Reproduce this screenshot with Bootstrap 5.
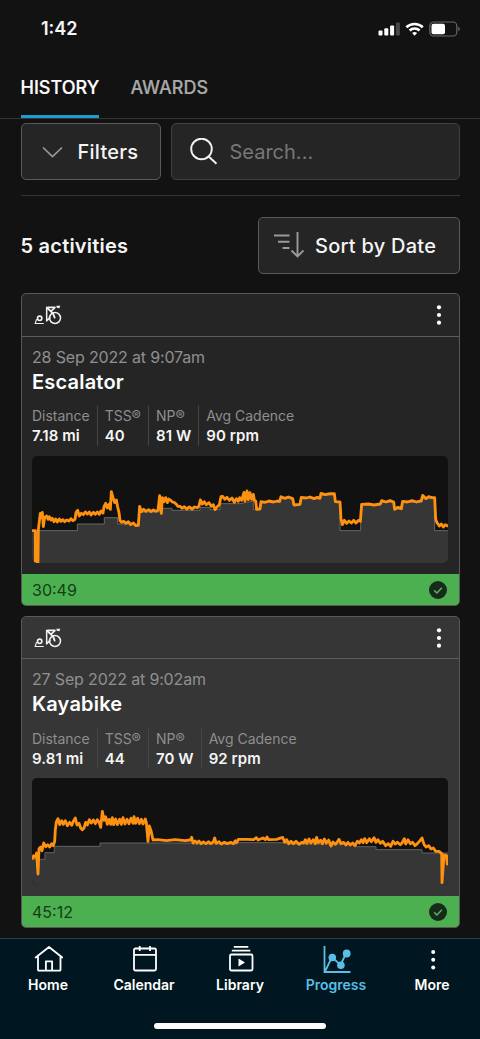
<!DOCTYPE html>
<html lang="en" data-bs-theme="dark">
<head>
<meta charset="utf-8">
<meta name="viewport" content="width=device-width, initial-scale=1">
<title>History</title>
<link href="https://cdn.jsdelivr.net/npm/bootstrap@5.3.0/dist/css/bootstrap.min.css" rel="stylesheet">
<style>
  body{background:#121212;color:#f5f5f5;font-family:Inter,"Liberation Sans",sans-serif;height:1039px;overflow:hidden}
  svg{display:block;flex:none}
  .statusbar{height:57px;padding:1px 20px 0 41px}
  .clock{font-size:18px;font-weight:600;line-height:22px;padding-top:1px}
  .toptabs{height:62px;border-bottom:1px solid #343434;padding-left:20.5px;gap:31px}
  .toptabs .nav-link{padding:0;height:61px;line-height:61px;font-size:18px;font-weight:500;-webkit-text-stroke:.2px;color:#a9a9a9;border-bottom:3px solid transparent;letter-spacing:.03px}
  .toptabs .nav-link.active{color:#fff;border-color:#1f9ccb}
  .page{padding:4px 20.5px 0 20.5px}
  .ctl{height:57px;background:#252525;border:1px solid #5a5a5a;border-radius:5px;font-size:20px;font-weight:500;color:#f5f5f5;padding:2px 0 0;letter-spacing:.25px}
  .ctl-search{border-color:#404040;font-weight:400;color:#777;letter-spacing:0}
  .rule{height:1px;background:#343434;margin:15px 0 21px}
  .count{font-size:20px;font-weight:600;letter-spacing:.22px;padding-top:1px}
  .ride{--bs-card-border-radius:5px;border:1px solid #585858;background:#252525;height:312.5px;overflow:hidden;margin-bottom:10px}
  .ride.alt{background:#363636}
  .ride .ridehead{height:42.500px;border-bottom:1px solid #5c5c5c;padding:0 17px 0 12px}
  .when{font-size:16px;line-height:20px;color:#909090;margin-top:10px;letter-spacing:-.16px}
  .ridename{font-size:20px;line-height:24px;font-weight:600;margin:3px 0 0;letter-spacing:.2px}
  .stats{margin-top:12.500px;height:40px;font-size:14px;line-height:20px}
  .stats>div{padding:0 7px;border-left:1px solid #464646;white-space:nowrap;letter-spacing:-.02px}
  .stats>div:first-child{padding-left:0;border:0}
  .stats span{display:block;color:#8e8e8e}
  .stats b{display:block;font-weight:600;font-size:15px;letter-spacing:.07px}
  .plot{width:416px;height:107px;border-radius:5px;background:#111;margin-top:9.500px;overflow:hidden}
  .ridefoot{background:#4caf50;color:#153d17;height:31px;font-size:16px;padding:1px 12px 0 10.500px}
  .tabbar{height:101px;background:#001620;border-top:1px solid #29424b}
  .tabbar .nav-link{padding:6px 0 0;width:96px;color:#fff;font-size:14px;font-weight:600;line-height:21px}
  .tabbar .nav-link.active{color:#58bfe6}
  .homebar{width:172px;height:6px;border-radius:3px;background:#fff;bottom:10px}
</style>
</head>
<body class="d-flex flex-column">
<svg class="d-none">
  <symbol id="bike" viewBox="0 0 84 60">
    <g fill="none" stroke="#f2f2f2" stroke-linecap="round" stroke-linejoin="round">
      <circle cx="63" cy="39" r="16.500" stroke-width="4.500"/>
      <circle cx="17" cy="40" r="6.500" stroke-width="5"/>
      <path d="M3 55.500H28M4 55l3-11" stroke-width="3.500"/>
      <path d="M38 7v41M39 46l9-8" stroke-width="4.500"/>
      <path d="M40 9l17 16M57 25l5 13" stroke-width="5.500"/>
      <path d="M42 7h21M62 9l-9 8" stroke-width="5"/>
    </g>
    <path d="M67 2h12l-3 8-8-2z" fill="#f2f2f2"/>
  </symbol>
  <symbol id="dots" viewBox="0 0 6 20"><circle cx="3" cy="2.300" r="2.100"/><circle cx="3" cy="10" r="2.100"/><circle cx="3" cy="17.700" r="2.100"/></symbol>
  <symbol id="done" viewBox="0 0 18 18"><circle cx="9" cy="9" r="9" fill="#162b19"/><path d="M5.200 9.400l2.700 2.600 5-5.200" fill="none" stroke="#5fae63" stroke-width="1.500"/></symbol>
</svg>

<header class="statusbar d-flex align-items-center justify-content-between">
  <span class="clock">1:42</span>
  <svg width="82" height="16" viewBox="0 0 82 16">
    <g fill="#fff"><rect x=".5" y="9.500" width="4" height="5" rx="1"/><rect x="6.300" y="7.300" width="4" height="7.200" rx="1"/><rect x="12.100" y="4.500" width="4" height="10" rx="1"/></g>
    <rect x="17.900" y="1.500" width="4" height="13" rx="1" fill="#484848"/>
    <g fill="none" stroke="#fff" stroke-width="2.600"><path d="M28.400 6.200a12 12 0 0 1 16.400 0"/><path d="M31.600 9.500a7.300 7.300 0 0 1 10 0"/></g>
    <path d="M36.600 14.700l-2.500-2.600a3.600 3.600 0 0 1 5 0z" fill="#fff"/>
    <rect x="51.800" y="1" width="27" height="14" rx="3.800" fill="none" stroke="#686868" stroke-width="1.200"/>
    <rect x="53.500" y="2.700" width="13.500" height="10.600" rx="2" fill="#fff"/>
    <path d="M80.200 5.800v4.400q1.600-.6 1.600-2.200t-1.600-2.200" fill="#686868"/>
  </svg>
</header>

<nav class="toptabs nav flex-nowrap">
  <a class="nav-link active">HISTORY</a>
  <a class="nav-link">AWARDS</a>
</nav>

<main class="page flex-grow-1 overflow-hidden">
  <div class="d-flex" style="gap:10px">
    <button class="ctl btn d-flex align-items-center" style="width:140px;padding-left:20px;gap:15px">
      <svg width="21" height="12" viewBox="0 0 21 12"><path d="M1 1.500l9.500 9 9.500-9" fill="none" stroke="#999" stroke-width="1.700"/></svg>Filters
    </button>
    <div class="ctl ctl-search flex-fill d-flex align-items-center" style="padding-left:18px;gap:12px">
      <svg width="28" height="28" viewBox="0 0 28 28" fill="none" stroke="#f2f2f2" stroke-width="1.900"><circle cx="11.500" cy="11" r="10.300"/><path d="M18.700 18.500l7.800 7.300"/></svg>Search...
    </div>
  </div>
  <div class="rule"></div>
  <div class="d-flex align-items-center justify-content-between" style="margin-bottom:19.500px">
    <span class="count">5 activities</span>
    <button class="ctl btn d-flex align-items-center" style="width:201.500px;padding-left:15px;gap:11px">
      <svg width="30" height="28" viewBox="0 0 30 28" fill="none" stroke="#999" stroke-width="1.900"><path d="M0 3.500h15.500M4 9.700h11.500M8.500 16h7M23.500 0v24.500M17.500 18.500l6 6 6-6"/></svg>Sort by Date
    </button>
  </div>

  <article class="ride card">
    <div class="ridehead d-flex align-items-center justify-content-between"><svg width="28" height="20"><use href="#bike"/></svg><svg width="6" height="20" fill="#fff"><use href="#dots"/></svg></div>
    <div class="flex-grow-1" style="padding:0 10.500px">
      <div class="when">28 Sep 2022 at 9:07am</div>
      <h2 class="ridename">Escalator</h2>
      <div class="stats d-flex"><div><span>Distance</span><b>7.18 mi</b></div><div><span>TSS®</span><b>40</b></div><div><span>NP®</span><b>81 W</b></div><div><span>Avg Cadence</span><b>90 rpm</b></div></div>
      <svg class="plot" viewBox="36 18 1248 321">
        <path d="M30 350V242H172V222H253V203H293V222H356V186H417V175H456V181H540V172H570V179H600V161H660L700 153V178H722V157H780V146H818V164H842V146H900V136H944V157H960V242H1022V164H1082V157H1122V178H1146V157H1206V146H1244V242H1290V350Z" fill="#363636" stroke="#666" stroke-width="3"/>
        <path d="M36 242L46 242V338H54L55 240 59 205 61 190 64 203 67 187 70 230 74 202 80 198 84 208 88 200 93 210 97 205 102 215 107 207 112 216 118 207 123 214 129 209 134 215 140 210 147 213 153 206 159 212 165 208 168 188 173 181 178 198 184 190 190 194 196 186 202 192 208 186 213 195 220 187 226 193 232 186 238 193 243 183 249 189 252 170 257 160 262 174 268 162 271 178 274 125 279 143 284 158 289 150 293 171 297 188 300 212 305 217 311 214 318 220 325 215 332 224 340 219 347 227 355 226 359 169 364 185 371 178 378 184 386 179 393 185 400 180 408 184 414 181 419 137 424 190 427 143 432 155 437 143 442 158 446 147 452 151 457 156 464 158 469 163 474 169 480 169 486 175 493 170 500 177 508 171 516 177 524 171 532 173 537 168 541 150 547 162 553 155 559 164 567 158 574 169 580 164 585 179 591 171 598 164 603 140 608 139 614 148 621 142 628 151 636 144 643 157 649 146 655 154 659 143 665 151 672 127 675 153 681 123 685 149 690 128 695 148 700 133 703 151 707 153 710 178 720 177 723 155 735 157 747 153 760 156 772 153 779 154 783 140 794 145 805 141 818 146 822 165 840 163 844 142 858 144 870 141 882 146 892 142 900 145 903 130 916 134 929 131 943 131 946 155 960 156 963 207 967 224 973 211 980 220 987 213 994 219 1001 211 1008 219 1015 211 1021 214 1025 163 1045 162 1062 165 1081 162 1085 152 1098 156 1110 152 1121 156 1124 178 1134 172 1144 176 1148 154 1162 156 1176 152 1190 156 1204 152 1208 136 1218 146 1226 140 1236 143 1244 143 1247 208 1251 218 1258 228 1264 222 1270 231 1276 224 1285 229" fill="none" stroke="#ff9111" stroke-width="8.500" stroke-linejoin="round"/>
      </svg>
    </div>
    <div class="ridefoot d-flex align-items-center justify-content-between"><span>30:49</span><svg width="18" height="18"><use href="#done"/></svg></div>
  </article>

  <article class="ride alt card">
    <div class="ridehead d-flex align-items-center justify-content-between"><svg width="28" height="20"><use href="#bike"/></svg><svg width="6" height="20" fill="#fff"><use href="#dots"/></svg></div>
    <div class="flex-grow-1" style="padding:0 10.500px">
      <div class="when">27 Sep 2022 at 9:02am</div>
      <h2 class="ridename">Kayabike</h2>
      <div class="stats d-flex"><div><span>Distance</span><b>9.81 mi</b></div><div><span>TSS®</span><b>44</b></div><div><span>NP®</span><b>70 W</b></div><div><span>Avg Cadence</span><b>92 rpm</b></div></div>
      <svg class="plot" viewBox="36 10 1248 321">
        <path d="M30 350V254H75V234H103V215H240V205H520V208H650V204H800V208H1008V216H1068V225H1206V235H1290V350Z" fill="#363636" stroke="#626262" stroke-width="3"/>
        <path d="M36 254L41 243 46 248 50 235 54 298 57 222 62 217 66 228 71 205 77 216 83 210 89 217 95 207 100 213 104 200 106 165 109 142 114 132 119 150 125 138 130 149 136 138 142 153 149 143 155 152 161 138 166 130 171 151 177 146 182 160 187 165 192 160 197 143 202 151 208 135 214 145 220 136 226 147 232 135 237 142 242 158 247 110 252 137 257 126 262 149 267 134 272 149 277 129 281 150 287 133 292 150 299 134 304 149 309 129 315 148 321 134 327 147 333 131 339 146 342 126 347 146 353 131 358 147 364 134 369 148 376 133 379 144 384 200 388 154 393 168 399 196 412 195 440 198 465 195 495 198 511 196 515 188 519 205 525 199 531 205 537 199 543 207 550 202 558 207 566 201 572 207 580 202 584 190 589 206 597 201 604 208 613 203 622 207 632 203 640 207 646 198 650 204 655 194 680 194 701 195 709 189 714 196 729 190 736 195 741 187 746 195 770 194 788 188 794 203 800 195 806 207 813 200 820 207 828 200 837 209 845 203 851 205 856 195 861 206 867 193 873 205 880 195 886 207 890 188 895 204 902 197 907 207 913 193 919 205 926 196 933 214 939 202 946 209 952 202 957 194 963 207 971 203 978 211 984 203 991 211 998 205 1005 213 1012 200 1018 205 1024 195 1029 204 1034 192 1040 204 1048 192 1054 201 1062 189 1068 203 1074 195 1081 206 1088 200 1097 213 1105 207 1112 215 1119 200 1126 208 1132 203 1141 210 1146 205 1153 192 1157 208 1164 195 1171 207 1178 203 1185 213 1192 207 1200 198 1206 190 1212 209 1218 217 1226 213 1233 223 1240 220 1247 230 1257 230 1265 237 1266 324 1272 241 1279 243 1282 268 1284 240" fill="none" stroke="#ff9111" stroke-width="8.500" stroke-linejoin="round"/>
      </svg>
    </div>
    <div class="ridefoot d-flex align-items-center justify-content-between"><span>45:12</span><svg width="18" height="18"><use href="#done"/></svg></div>
  </article>
</main>

<footer class="tabbar position-relative flex-shrink-0">
  <nav class="nav flex-nowrap">
    <a class="nav-link d-flex flex-column align-items-center"><svg width="29" height="29" viewBox="0 0 29 29" fill="none" stroke="#fff" stroke-width="1.800" stroke-linejoin="round" stroke-linecap="round"><path d="M1.700 12.500L15 2l13.300 10.500M4 11.500v13.200q0 1 1 1h20.500q1 0 1-1V11.500M11.900 25.500v-9.200h6.200v9.200"/></svg>Home</a>
    <a class="nav-link d-flex flex-column align-items-center"><svg width="29" height="29" viewBox="0 0 29 29" fill="none" stroke="#fff" stroke-width="1.800"><rect x="4" y="3.500" width="22" height="22" rx="1.500"/><path d="M4 9.800h22M9.700 1v5M20 1v5"/></svg>Calendar</a>
    <a class="nav-link d-flex flex-column align-items-center"><svg width="29" height="29" viewBox="0 0 29 29" fill="none" stroke="#fff" stroke-width="1.800"><rect x="4" y="9.500" width="22.500" height="16" rx="1.500"/><path d="M5.800 5.700h18.500M7.800 1.800h14.500"/><path d="M12.500 13.500v8l6.500-4z" fill="#fff" stroke="none"/></svg>Library</a>
    <a class="nav-link active d-flex flex-column align-items-center"><svg width="29" height="29" viewBox="0 0 29 29" fill="none" stroke="#58bfe6" stroke-width="1.800"><path d="M2.500 1v26H28.500M3 26.500l7-14.500 8.500 8 6-12.500"/><g fill="#58bfe6" stroke="none"><circle cx="10.300" cy="12.500" r="3.800"/><circle cx="18.900" cy="20.200" r="3.800"/><circle cx="24.700" cy="8.500" r="3.900"/></g></svg>Progress</a>
    <a class="nav-link d-flex flex-column align-items-center"><svg width="29" height="29" viewBox="0 0 29 29" fill="#fff"><circle cx="15.200" cy="7" r="2"/><circle cx="15.200" cy="14.700" r="2"/><circle cx="15.200" cy="22.500" r="2"/></svg>More</a>
  </nav>
  <div class="homebar position-absolute start-50 translate-middle-x"></div>
</footer>
<script src="https://cdn.jsdelivr.net/npm/bootstrap@5.3.0/dist/js/bootstrap.bundle.min.js"></script>
</body>
</html>
